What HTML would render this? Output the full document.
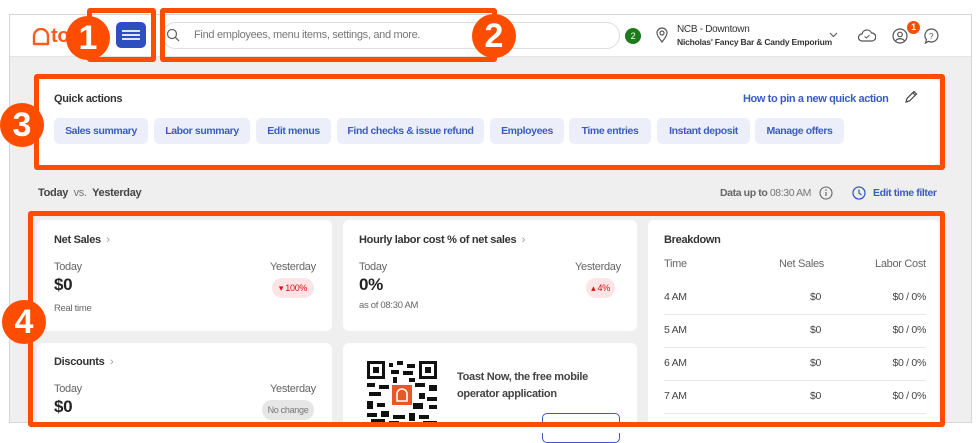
<!DOCTYPE html>
<html><head><meta charset="utf-8"><style>
*{box-sizing:border-box;margin:0;padding:0}
body{width:980px;height:433px;background:#fff;position:relative;overflow:hidden;font-family:"Liberation Sans",sans-serif;color:#333;letter-spacing:-0.3px}
.a{position:absolute}
.frame{left:9px;top:14px;width:963px;height:409px;background:#efefef;border:1px solid #d6d6d6}
.hdr{left:10px;top:15px;width:961px;height:42px;background:#fff;border-bottom:1px solid #e4e4e4}
.card{background:#fff;border-radius:6px}
.chip{position:absolute;top:118px;height:26px;background:#eceffa;border-radius:5px;color:#3a5bc7;font-weight:bold;font-size:10.5px;line-height:26px;text-align:center;white-space:nowrap;letter-spacing:-0.4px}
.box{position:absolute;border:5px solid #ff4d00;border-radius:3px}
.num{position:absolute;width:44px;height:44px;border-radius:50%;background:#ff4d00;color:#fff;font-weight:bold;font-size:34px;line-height:44px;text-align:center;letter-spacing:0}
.t11{font-size:11px}
.lbl{font-size:11px;color:#666}
.big{font-size:17px;font-weight:bold;color:#222}
.row{position:absolute;left:664px;width:262px;font-size:10.5px;color:#444;border-bottom:1px solid #e8e8e8;height:33px;line-height:30px}
.row span{position:absolute}
</style></head><body>
<div class="a frame"></div>
<div class="a hdr"></div>
<svg class="a" style="left:31px;top:28px" width="20" height="18" viewBox="0 0 20 18"><path d="M3 16 V8 a7 7 0 0 1 14 0 V16 Z" fill="none" stroke="#ff5a1f" stroke-width="2.4" stroke-linejoin="round"/></svg>
<div class="a" style="left:51px;top:25px;font-size:20px;font-weight:bold;color:#ff5a1f">to</div>
<div class="a" style="left:116px;top:22px;width:30px;height:26px;background:#2e4fbf;border-radius:5px"></div>
<div class="a" style="left:122px;top:30px;width:18px;height:1.5px;background:#dfe5ff;box-shadow:0 4px 0 #dfe5ff,0 8px 0 #dfe5ff"></div>
<div class="a" style="left:162px;top:22px;width:458px;height:27px;border:1px solid #ddd;border-radius:14px;background:#fff"></div>
<svg class="a" style="left:166px;top:28px" width="14" height="14" viewBox="0 0 14 14"><circle cx="6" cy="6" r="4.5" fill="none" stroke="#666" stroke-width="1.3"/><path d="M9.5 9.5 L13 13" stroke="#666" stroke-width="1.3"/></svg>
<div class="a" style="left:194px;top:29px;font-size:11px;color:#777">Find employees, menu items, settings, and more.</div>
<div class="a" style="left:625px;top:28px;width:16px;height:16px;border-radius:50%;background:#1d7a1d;color:#fff;font-size:9px;line-height:16px;text-align:center">2</div>
<svg class="a" style="left:656px;top:27px" width="12" height="16" viewBox="0 0 12 16"><path d="M6 15 C2 10 1 8 1 6 a5 5 0 0 1 10 0 c0 2-1 4-5 9Z" fill="none" stroke="#555" stroke-width="1.2"/><circle cx="6" cy="6" r="2" fill="none" stroke="#555" stroke-width="1.2"/></svg>
<div class="a" style="left:677px;top:24px;font-size:10px;color:#333">NCB - Downtown</div>
<div class="a" style="left:677px;top:37px;font-size:8.5px;color:#333;font-weight:bold;letter-spacing:-0.2px">Nicholas' Fancy Bar &amp; Candy Emporium</div>
<svg class="a" style="left:829px;top:32px" width="9" height="6" viewBox="0 0 9 6"><path d="M1 1l3.5 3.5L8 1" fill="none" stroke="#555" stroke-width="1.1"/></svg>
<svg class="a" style="left:858px;top:28px" width="18" height="14" viewBox="0 0 18 14"><path d="M4 13 a3.5 3.5 0 0 1 0-7 a5 5 0 0 1 9.5-1 a4 4 0 0 1 0.5 8Z" fill="none" stroke="#555" stroke-width="1.2"/><path d="M6.5 8.5 l2 1.5 3-3" fill="none" stroke="#555" stroke-width="1"/></svg>
<svg class="a" style="left:892px;top:28px" width="16" height="16" viewBox="0 0 16 16"><circle cx="8" cy="8" r="7" fill="none" stroke="#555" stroke-width="1.2"/><circle cx="8" cy="6.5" r="2.3" fill="none" stroke="#555" stroke-width="1.2"/><path d="M3.5 13 a5 4 0 0 1 9 0" fill="none" stroke="#555" stroke-width="1.2"/></svg>
<div class="a" style="left:907px;top:21px;width:13px;height:13px;border-radius:50%;background:#f0500a;color:#fff;font-size:9px;font-weight:bold;line-height:13px;text-align:center">1</div>
<svg class="a" style="left:924px;top:28px" width="15" height="16" viewBox="0 0 15 16"><path d="M7.5 1 a6.5 6.5 0 1 1-3 12.3 L1.5 15 l1-3.3 A6.5 6.5 0 0 1 7.5 1Z" fill="none" stroke="#555" stroke-width="1.2"/><text x="5" y="11" font-size="8" fill="#555" font-family="Liberation Sans">?</text></svg>

<div class="a card" style="left:37px;top:79px;width:903px;height:86px"></div>
<div class="a t11" style="left:54px;top:93px;font-weight:bold;color:#333">Quick actions</div>
<div class="a t11" style="left:743px;top:93px;font-weight:bold;color:#3a5bc7;letter-spacing:-0.4px">How to pin a new quick action</div>
<svg class="a" style="left:904px;top:90px" width="14" height="14" viewBox="0 0 14 14"><path d="M2 12 l1-3.5 7-7 2.5 2.5-7 7Z M9 3 l2.5 2.5" fill="none" stroke="#444" stroke-width="1.2"/></svg>
<div class="chip" style="left:54px;width:94px">Sales summary</div>
<div class="chip" style="left:154px;width:96px">Labor summary</div>
<div class="chip" style="left:256px;width:75px">Edit menus</div>
<div class="chip" style="left:337px;width:147px">Find checks &amp; issue refund</div>
<div class="chip" style="left:490px;width:74px">Employees</div>
<div class="chip" style="left:569px;width:82px">Time entries</div>
<div class="chip" style="left:657px;width:93px">Instant deposit</div>
<div class="chip" style="left:755px;width:89px">Manage offers</div>

<div class="a t11" style="left:38px;top:187px;font-weight:bold;color:#444">Today <span style="font-weight:normal;color:#777">&nbsp;vs.&nbsp;</span> Yesterday</div>
<div class="a" style="left:720px;top:187px;color:#777;font-size:10.5px;letter-spacing:-0.4px"><b style="color:#666">Data up to</b> 08:30 AM</div>
<svg class="a" style="left:819px;top:186px" width="14" height="14" viewBox="0 0 14 14"><circle cx="7" cy="7" r="6" fill="none" stroke="#666" stroke-width="1.1"/><path d="M7 6v4" stroke="#666" stroke-width="1.2"/><circle cx="7" cy="4" r=".8" fill="#666"/></svg>
<svg class="a" style="left:852px;top:186px" width="14" height="14" viewBox="0 0 14 14"><circle cx="7" cy="7" r="6" fill="none" stroke="#3a5bc7" stroke-width="1.3"/><path d="M7 3.5V7l2.5 2" fill="none" stroke="#3a5bc7" stroke-width="1.3"/></svg>
<div class="a" style="left:873px;top:187px;font-weight:bold;color:#3a5bc7;font-size:10.5px;letter-spacing:-0.4px">Edit time filter</div>

<div class="a card" style="left:37px;top:220px;width:295px;height:111px"></div>
<div class="a t11" style="left:54px;top:234px;font-weight:bold">Net Sales <span style="color:#999;font-weight:normal">&nbsp;›</span></div>
<div class="a lbl" style="left:54px;top:261px">Today</div>
<div class="a lbl" style="left:270px;top:261px">Yesterday</div>
<div class="a big" style="left:54px;top:275px">$0</div>
<div class="a" style="left:272px;top:278px;width:42px;height:20px;border-radius:10px;background:#fde4e6;color:#d11;font-size:9px;line-height:20px;text-align:center">▾ 100%</div>
<div class="a" style="left:54px;top:303px;font-size:9.5px;color:#666">Real time</div>

<div class="a card" style="left:343px;top:220px;width:294px;height:111px"></div>
<div class="a t11" style="left:359px;top:234px;font-weight:bold">Hourly labor cost % of net sales <span style="color:#999;font-weight:normal">&nbsp;›</span></div>
<div class="a lbl" style="left:359px;top:261px">Today</div>
<div class="a lbl" style="left:575px;top:261px">Yesterday</div>
<div class="a big" style="left:359px;top:275px">0%</div>
<div class="a" style="left:586px;top:278px;width:29px;height:20px;border-radius:10px;background:#fde4e6;color:#d11;font-size:9px;line-height:20px;text-align:center">▴ 4%</div>
<div class="a" style="left:359px;top:300px;font-size:9.5px;color:#666">as of 08:30 AM</div>

<div class="a card" style="left:37px;top:343px;width:295px;height:90px"></div>
<div class="a t11" style="left:54px;top:356px;font-weight:bold">Discounts <span style="color:#999;font-weight:normal">&nbsp;›</span></div>
<div class="a lbl" style="left:54px;top:383px">Today</div>
<div class="a lbl" style="left:270px;top:383px">Yesterday</div>
<div class="a big" style="left:54px;top:397px">$0</div>
<div class="a" style="left:262px;top:400px;width:52px;height:20px;border-radius:10px;background:#e6e6e6;color:#777;font-size:9px;line-height:20px;text-align:center">No change</div>

<div class="a card" style="left:343px;top:343px;width:294px;height:90px"></div>
<svg class="a" style="left:367px;top:361px" width="70" height="64" viewBox="0 0 70 64">
<g fill="#111">
<rect x="0" y="0" width="18" height="18"/><rect x="52" y="0" width="18" height="18"/>
<rect x="22" y="2" width="4" height="4"/><rect x="30" y="0" width="6" height="4"/><rect x="40" y="3" width="8" height="4"/><rect x="24" y="9" width="8" height="4"/><rect x="36" y="10" width="10" height="4"/><rect x="26" y="16" width="4" height="6"/><rect x="42" y="17" width="6" height="4"/>
<rect x="0" y="22" width="8" height="4"/><rect x="12" y="24" width="10" height="4"/><rect x="48" y="22" width="10" height="4"/><rect x="62" y="24" width="8" height="6"/>
<rect x="2" y="31" width="12" height="4"/><rect x="52" y="32" width="6" height="6"/><rect x="60" y="36" width="10" height="4"/>
<rect x="0" y="40" width="6" height="8"/><rect x="10" y="42" width="8" height="4"/><rect x="46" y="42" width="10" height="6"/><rect x="62" y="44" width="8" height="4"/>
<rect x="0" y="52" width="10" height="4"/><rect x="14" y="50" width="8" height="6"/><rect x="26" y="54" width="12" height="4"/><rect x="42" y="52" width="6" height="8"/><rect x="52" y="54" width="10" height="4"/><rect x="4" y="58" width="14" height="6"/><rect x="22" y="60" width="10" height="4"/><rect x="56" y="60" width="14" height="4"/>
</g>
<g fill="#fff"><rect x="3" y="3" width="12" height="12"/><rect x="55" y="3" width="12" height="12"/></g>
<g fill="#111"><rect x="6" y="6" width="6" height="6"/><rect x="58" y="6" width="6" height="6"/></g>
<rect x="25" y="24" width="20" height="20" fill="#e8572a"/>
<path d="M30 40 V33 a5 5 0 0 1 10 0 V40Z" fill="none" stroke="#fff" stroke-width="1.6"/>
</svg>
<div class="a t11" style="left:457px;top:369px;font-weight:bold;color:#444;line-height:17px">Toast Now, the free mobile<br>operator application</div>
<div class="a" style="left:542px;top:413px;width:78px;height:30px;border:1.5px solid #3a5bc7;border-radius:5px"></div>

<div class="a card" style="left:648px;top:220px;width:292px;height:213px"></div>
<div class="a t11" style="left:664px;top:234px;font-weight:bold">Breakdown</div>
<div class="a lbl" style="left:664px;top:258px">Time</div>
<div class="a lbl" style="left:779px;top:258px">Net Sales</div>
<div class="a lbl" style="left:875px;top:258px">Labor Cost</div>
<div class="row" style="top:282px"><span style="left:0">4 AM</span><span style="left:146px">$0</span><span style="right:0">$0 / 0%</span></div>
<div class="row" style="top:315px"><span style="left:0">5 AM</span><span style="left:146px">$0</span><span style="right:0">$0 / 0%</span></div>
<div class="row" style="top:348px"><span style="left:0">6 AM</span><span style="left:146px">$0</span><span style="right:0">$0 / 0%</span></div>
<div class="row" style="top:381px"><span style="left:0">7 AM</span><span style="left:146px">$0</span><span style="right:0">$0 / 0%</span></div>

<div class="a" style="left:0;top:425px;width:980px;height:8px;background:#fff"></div>
<div class="box" style="left:87px;top:8px;width:69px;height:54px"></div>
<div class="box" style="left:160px;top:8px;width:337px;height:54px"></div>
<div class="box" style="left:34px;top:74px;width:911px;height:96px"></div>
<div class="box" style="left:28px;top:211px;width:917px;height:216px"></div>
<div class="num" style="left:66px;top:16px">1</div>
<div class="num" style="left:472px;top:14px">2</div>
<div class="num" style="left:0;top:103px">3</div>
<div class="num" style="left:2px;top:300px">4</div>
</body></html>
